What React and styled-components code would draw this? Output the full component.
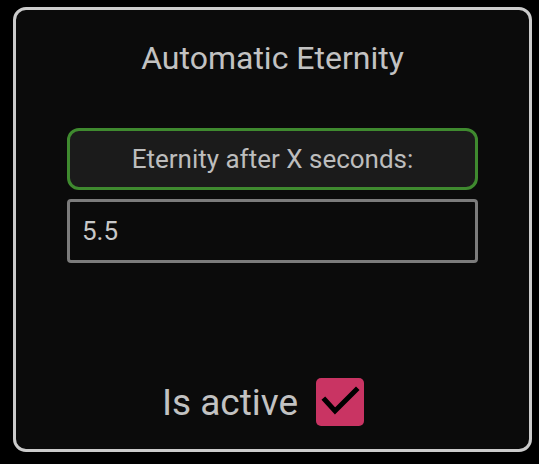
import React, { useState } from "react";
import styled, { createGlobalStyle } from "styled-components";

const Global = createGlobalStyle`
  html, body {
    margin: 0;
    padding: 0;
    background: #000;
  }
  body {
    font-family: Roboto, "Noto Sans", "Liberation Sans", sans-serif;
  }
  * { box-sizing: border-box; }
`;

const Page = styled.div`
  padding: 7px 7px 12px 13px;
`;

const Card = styled.section`
  width: 519px;
  height: 445px;
  background: #0b0b0b;
  border: 3px solid #cbcbcb;
  border-radius: 13px;
  display: flex;
  flex-direction: column;
  align-items: center;
  padding: 30px 51px 23px;
`;

const Title = styled.h1`
  margin: 0;
  font-weight: 400;
  font-size: 32px;
  line-height: 36px;
  color: #c2c2c2;
`;

const Form = styled.div`
  width: 100%;
  display: flex;
  flex-direction: column;
  gap: 9px;
  margin-top: 52px;
`;

const Label = styled.div`
  height: 62px;
  border: 3px solid #3f8a2f;
  border-radius: 12px;
  background: #1b1b1b;
  display: flex;
  align-items: center;
  justify-content: center;
  font-size: 26px;
  color: #bdbdbd;
`;

const Input = styled.input`
  height: 64px;
  width: 100%;
  border: 3px solid #7c7c7c;
  border-radius: 4px;
  background: #0b0b0b;
  padding: 0 12px;
  font-family: inherit;
  font-size: 26px;
  color: #c8c8c8;
  outline: none;
`;

const Toggle = styled.label`
  margin-top: auto;
  display: flex;
  align-items: center;
  gap: 18px;
  margin-right: 19px;
  font-size: 37px;
  color: #c2c2c2;
  cursor: pointer;
`;

const Box = styled.span`
  width: 48px;
  height: 48px;
  border-radius: 5px;
  background: ${(p) => (p.$checked ? "#c93463" : "transparent")};
  border: ${(p) => (p.$checked ? "none" : "3px solid #c93463")};
  display: block;
`;

export default function App() {
  const [value, setValue] = useState("5.5");
  const [active, setActive] = useState(true);
  return (
    <>
      <Global />
      <Page>
        <Card>
          <Title>Automatic Eternity</Title>
          <Form>
            <Label>Eternity after X seconds:</Label>
            <Input value={value} onChange={(e) => setValue(e.target.value)} />
          </Form>
          <Toggle onClick={() => setActive((a) => !a)}>
            Is active
            <Box $checked={active}>
              {active && (
                <svg width="48" height="48" viewBox="0 0 48 48">
                  <path
                    d="M9 22 L19 33 L40 12"
                    fill="none"
                    stroke="#000"
                    strokeWidth="5"
                    strokeLinecap="square"
                  />
                </svg>
              )}
            </Box>
          </Toggle>
        </Card>
      </Page>
    </>
  );
}
